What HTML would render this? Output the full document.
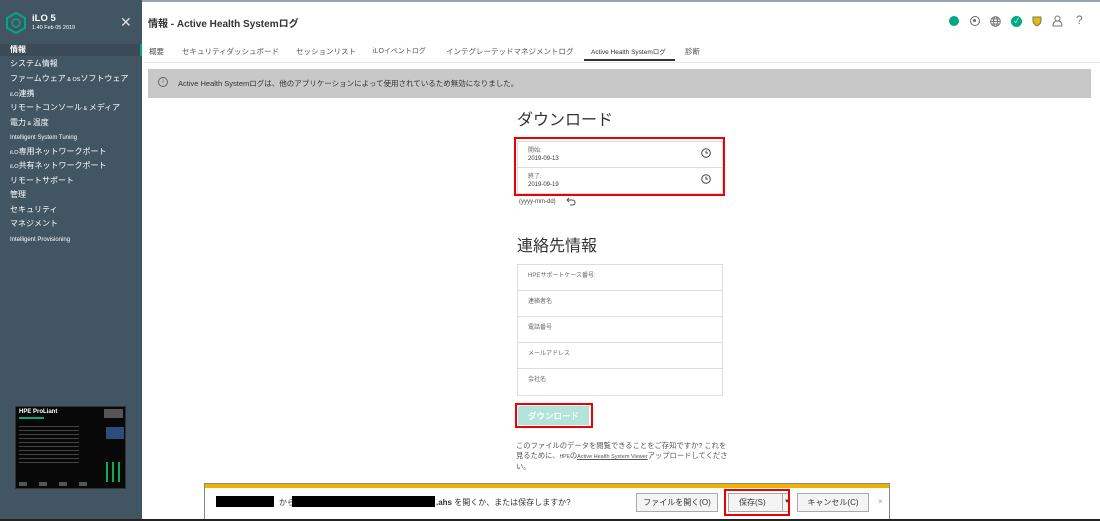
<!DOCTYPE html>
<html><head><meta charset="utf-8"><style>
*{box-sizing:border-box;margin:0;padding:0}
body{width:1100px;height:521px;overflow:hidden;background:#fff;font-family:"Liberation Sans","Noto Sans CJK JP",sans-serif;position:relative;color:#333}
.a{position:absolute;white-space:nowrap}
#side{position:absolute;left:0;top:0;width:142px;height:519px;background:#425563;color:#fff}
#side .m{position:absolute;left:10px;font-size:8px;color:#fff;line-height:10px}
#side .m span{font-size:5.5px}
.tabs span{position:absolute;top:46px;font-size:7.5px;color:#555}
.fld{position:absolute;left:517px;width:206px;border:1px solid #ddd}
.fld div{position:absolute;left:10px;font-size:6px;color:#666}
</style></head><body>
<div class="a" style="left:0;top:0;width:1100px;height:2px;background:#9aa3b0"></div>
<div id="side">
<svg class="a" style="left:6px;top:12px" width="20" height="22" viewBox="0 0 20 22"><path d="M10 1L19 6V16L10 21L1 16V6Z" fill="none" stroke="#01a982" stroke-width="2"/><circle cx="10" cy="11" r="4" fill="none" stroke="#01a982" stroke-width="1.5"/></svg>
<div class="a" style="left:32px;top:13px;font-size:9.5px;font-weight:bold">iLO 5</div>
<div class="a" style="left:32px;top:25px;font-size:5.5px">1.40 Feb 05 2019</div>
<div class="a" style="left:120px;top:14px;font-size:14px;color:#ddd">✕</div>
<div class="a" style="left:0;top:44px;width:142px;height:12px;background:#3a4a56"></div>
<div class="a" style="left:140px;top:44px;width:2px;height:12px;background:#01a982"></div>
<div class="m" style="top:45px;font-weight:bold">情報</div>
<div class="m" style="top:59px">システム情報</div>
<div class="m" style="top:74px">ファームウェア<span> &amp; OS</span>ソフトウェア</div>
<div class="m" style="top:89px"><span>iLO</span>連携</div>
<div class="m" style="top:103px">リモートコンソール<span> &amp; </span>メディア</div>
<div class="m" style="top:118px">電力<span> &amp; </span>温度</div>
<div class="m" style="top:133px;font-size:6px">Intelligent System Tuning</div>
<div class="m" style="top:147px"><span>iLO</span>専用ネットワークポート</div>
<div class="m" style="top:161px"><span>iLO</span>共有ネットワークポート</div>
<div class="m" style="top:176px">リモートサポート</div>
<div class="m" style="top:190px">管理</div>
<div class="m" style="top:205px">セキュリティ</div>
<div class="m" style="top:219px">マネジメント</div>
<div class="m" style="top:235px;font-size:6px">Intelligent Provisioning</div>
<div class="a" style="left:15px;top:406px;width:111px;height:83px;background:#080808;border:1px solid #333">
<div class="a" style="left:3px;top:2px;font-size:6px;color:#fff;font-weight:bold">HPE ProLiant</div>
<div class="a" style="left:3px;top:10px;width:25px;height:2px;background:#01a982"></div>
<div class="a" style="left:88px;top:2px;width:19px;height:9px;background:#555"></div>
<div class="a" style="left:3px;top:16px;width:60px;height:40px;background:repeating-linear-gradient(#080808 0 3px,#444 3px 4px)"></div>
<div class="a" style="left:90px;top:20px;width:18px;height:12px;background:#2a4d7a"></div>
<div class="a" style="left:90px;top:55px;width:18px;height:20px;background:repeating-linear-gradient(90deg,#1a5 0 2px,#080808 2px 6px)"></div>
<div class="a" style="left:3px;top:75px;width:80px;height:4px;background:repeating-linear-gradient(90deg,#555 0 8px,#080808 8px 20px)"></div>
</div>
</div>
<div class="a" style="left:148px;top:15px;font-size:10px;font-weight:bold;color:#333">情報 - Active Health Systemログ</div>
<div class="tabs">
<span style="left:149px">概要</span>
<span style="left:182px">セキュリティダッシュボード</span>
<span style="left:296px">セッションリスト</span>
<span style="left:373px;font-size:7px">iLOイベントログ</span>
<span style="left:446px">インテグレーテッドマネジメントログ</span>
<span style="left:591px;font-size:6.5px;color:#333">Active Health Systemログ</span>
<span style="left:685px">診断</span>
</div>
<div class="a" style="left:584px;top:59px;width:91px;height:2px;background:#333"></div>
<div class="a" style="left:144px;top:62px;width:956px;height:1px;background:#e6e6e6"></div>
<div class="a" style="left:148px;top:69px;width:943px;height:29px;background:#c8c8c8"></div>
<div class="a" style="left:158px;top:77px;width:10px;height:10px;border:1px solid #666;border-radius:50%;font-size:6px;text-align:center;line-height:8px;color:#666">i</div>
<div class="a" style="left:178px;top:78px;font-size:7.5px;color:#333">Active Health Systemログは、他のアプリケーションによって使用されているため無効になりました。</div>
<div class="a" style="left:949px;top:16px;width:10px;height:10px;border-radius:50%;background:#01a982"></div>
<div class="a" style="left:970px;top:16px;width:10px;height:10px;border-radius:50%;border:1.5px solid #666"><div class="a" style="left:2px;top:2px;width:3px;height:3px;border-radius:50%;background:#666"></div></div>
<svg class="a" style="left:990px;top:16px" width="11" height="11" viewBox="0 0 11 11" fill="none" stroke="#777"><circle cx="5.5" cy="5.5" r="4.8"/><ellipse cx="5.5" cy="5.5" rx="2" ry="4.8"/><path d="M1 5.5H10M1.5 3H9.5M1.5 8H9.5"/></svg>
<div class="a" style="left:1011px;top:16px;width:11px;height:11px;border-radius:50%;background:#01a982;color:#fff;font-size:7px;text-align:center;line-height:11px">✓</div>
<svg class="a" style="left:1032px;top:16px" width="10" height="11" viewBox="0 0 10 11"><path d="M1 1H9V5C9 8 5 10 5 10C5 10 1 8 1 5Z" fill="#e6b800" stroke="#777"/></svg>
<svg class="a" style="left:1052px;top:15px" width="11" height="12" viewBox="0 0 11 12" fill="none" stroke="#777"><circle cx="5.5" cy="3.5" r="2.5"/><path d="M1 11C1 7 3 6 5.5 6S10 7 10 11Z"/></svg>
<div class="a" style="left:1076px;top:13px;font-size:12px;color:#777">?</div>
<div class="a" style="left:517px;top:106px;font-size:16px;color:#333">ダウンロード</div>
<div class="fld" style="top:141px;height:27px"><div style="top:3px">開始:</div><div style="top:14px;color:#333">2019-09-13</div></div>
<div class="fld" style="top:167px;height:27px"><div style="top:3px">終了:</div><div style="top:14px;color:#333">2019-09-19</div></div>
<svg class="a" style="left:701px;top:148px" width="10" height="10" viewBox="0 0 10 10" fill="none" stroke="#444"><circle cx="5" cy="5" r="4.3"/><path d="M5 2.5V5H7"/></svg>
<svg class="a" style="left:701px;top:174px" width="10" height="10" viewBox="0 0 10 10" fill="none" stroke="#444"><circle cx="5" cy="5" r="4.3"/><path d="M5 2.5V5H7"/></svg>
<div class="a" style="left:514px;top:137px;width:211px;height:59px;border:2px solid #e00"></div>
<div class="a" style="left:519px;top:199px;font-size:6px;color:#444">(yyyy-mm-dd)</div>
<svg class="a" style="left:566px;top:197px" width="10" height="9" viewBox="0 0 10 9" fill="none" stroke="#555"><path d="M3 1L1 3L3 5M1 3H6C8 3 9 4 9 5.5S8 8 6 8H4"/></svg>
<div class="a" style="left:517px;top:232px;font-size:16px;color:#333">連絡先情報</div>
<div class="fld" style="top:264px;height:27px"><div style="top:5px">HPEサポートケース番号:</div></div>
<div class="fld" style="top:290px;height:27px"><div style="top:5px">連絡者名</div></div>
<div class="fld" style="top:316px;height:27px"><div style="top:5px">電話番号</div></div>
<div class="fld" style="top:342px;height:27px"><div style="top:5px">メールアドレス</div></div>
<div class="fld" style="top:368px;height:28px"><div style="top:5px">会社名</div></div>
<div class="a" style="left:518px;top:406px;width:71px;height:19px;background:#b2e4d9;color:#fff;font-size:8.5px;font-weight:bold;padding:4px 0 0 10px">ダウンロード</div>
<div class="a" style="left:515px;top:403px;width:78px;height:25px;border:2px solid #e00"></div>
<div class="a" style="left:516px;top:441px;width:212px;font-size:7.3px;color:#555;white-space:normal;line-height:10px">このファイルのデータを閲覧できることをご存知ですか? これを見るために、<span style="font-size:5px">HPE</span>の<u style="font-size:5.5px">Active Health System Viewer</u>アップロードしてください。</div>
<div class="a" style="left:204px;top:483px;width:686px;height:36px;background:#fff;border:1px solid #888;border-bottom:none"></div>
<div class="a" style="left:205px;top:484px;width:684px;height:4px;background:#f0b400"></div>
<div class="a" style="left:216px;top:496px;width:58px;height:11px;background:#000"></div>
<div class="a" style="left:279px;top:497px;font-size:8px;color:#333">から</div>
<div class="a" style="left:292px;top:496px;width:143px;height:11px;background:#000"></div>
<div class="a" style="left:436px;top:497px;font-size:8px;color:#333"><b>.ahs</b> を開くか、または保存しますか?</div>
<div class="a" style="left:636px;top:493px;width:82px;height:19px;border:1px solid #aaa;background:#f4f4f4;font-size:8px;text-align:center;line-height:17px">ファイルを開く(O)</div>
<div class="a" style="left:728px;top:493px;width:62px;height:19px;border:1px solid #aaa;background:#f4f4f4;font-size:8px;line-height:17px;padding-left:10px">保存(S)<span style="position:absolute;left:53px;top:0;height:17px;border-left:1px solid #aaa;padding-left:1px;font-size:6px">▼</span></div>
<div class="a" style="left:724px;top:489px;width:66px;height:27px;border:2px solid #e00"></div>
<div class="a" style="left:797px;top:493px;width:72px;height:19px;border:1px solid #aaa;background:#f4f4f4;font-size:8px;text-align:center;line-height:17px">キャンセル(C)</div>
<div class="a" style="left:878px;top:497px;font-size:8px;color:#999">×</div>
<div class="a" style="left:0;top:519px;width:1100px;height:2px;background:#222"></div>
</body></html>
